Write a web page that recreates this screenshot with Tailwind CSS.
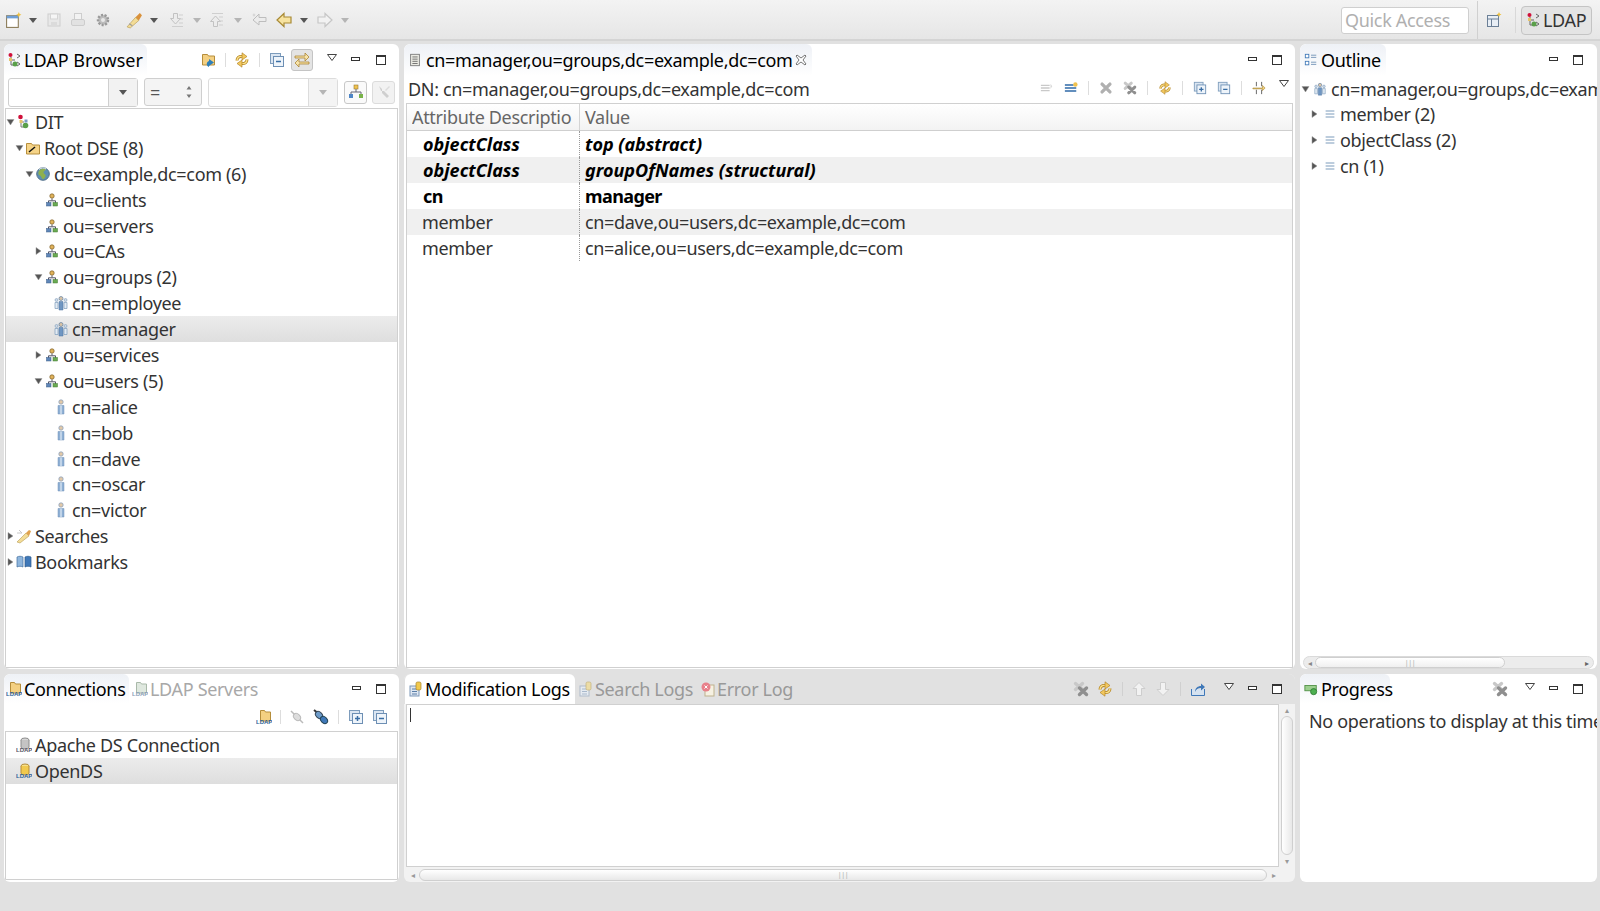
<!DOCTYPE html>
<html lang="en">
<head>
<meta charset="UTF-8">
<title>LDAP - Apache Directory Studio</title>
<script src="https://cdn.jsdelivr.net/npm/@tailwindcss/browser@4"></script>
</head>
<body class="w-[1600px] h-[911px] overflow-hidden whitespace-nowrap bg-[#e1e1e1] text-[18px] leading-[26px] tracking-[-0.33px] text-[#333] font-['Noto_Sans',sans-serif]">

<!-- shared icons -->
<svg class="hidden">
  <defs>
    <symbol id="tri" viewBox="0 0 10 10"><path d="M1 3h8L5 8z" fill="#555"/></symbol>
    <symbol id="tri-light" viewBox="0 0 10 10"><path d="M1 3h8L5 8z" fill="#b5b5b5"/></symbol>
    <symbol id="view-menu" viewBox="0 0 12 10"><path d="M1.5 1.5h9L6 7.500z" fill="#fff" stroke="#444"/></symbol>
    <symbol id="min" viewBox="0 0 12 12"><rect x="1.500" y="3.500" width="8" height="3" fill="#fff" stroke="#333"/></symbol>
    <symbol id="max" viewBox="0 0 12 12"><rect x="1.500" y="1.500" width="9" height="9" fill="#fff" stroke="#333"/><path d="M1.500 2.500h9" stroke="#333"/></symbol>
    <symbol id="open" viewBox="0 0 10 10"><path d="M1 2.500h7L4.500 8z" fill="#555" stroke="#999" stroke-width=".5"/></symbol>
    <symbol id="closed" viewBox="0 0 10 10"><path d="M2 1.500 7 5 2 8.500z" fill="#555" stroke="#999" stroke-width=".5"/></symbol>
    <symbol id="spin" viewBox="0 0 8 14"><path d="M4 1l2.500 3.500h-5zM4 13l2.500-3.500h-5z" fill="#777"/></symbol>
    <symbol id="dit" viewBox="0 0 16 16"><circle cx="4.500" cy="3" r="2.300" fill="#d0103a"/><path d="M5 6v7h3M5 8h3" stroke="#777" fill="none"/><rect x="3.500" y="6" width="3" height="3" fill="#e6c36a"/><circle cx="9.500" cy="11.500" r="2.800" fill="#5aa04a"/><rect x="8.500" y="5.500" width="3" height="3" fill="#7a9cc6"/></symbol>
    <symbol id="rootdse" viewBox="0 0 16 16"><path d="M1.500 3.500h5l1 1.500h7v9h-13z" fill="#f6d488" stroke="#b78f3c"/><path d="M4 12 10 7" stroke="#111" stroke-width="1.500"/></symbol>
    <symbol id="globe" viewBox="0 0 16 16"><circle cx="8" cy="8" r="6.300" fill="#5d8fb3" stroke="#56718a"/><path d="M3.500 6c1-3 5-4.500 7-3 1 1-2 2-2 3.500s3 2 2 4-2 3-3 2.500-1-3-2.500-3.500S3 8 3.500 6z" fill="#8fb04e"/><path d="M4 3.500c2-2 5-2 7-.5" stroke="#e6eef5" fill="none"/></symbol>
    <symbol id="ou" viewBox="0 0 16 16"><circle cx="8" cy="4" r="2.200" fill="#e0b25a" stroke="#7a5c22" stroke-width=".7"/><path d="M8 6.500v2M4.500 11V8.800h7V11" stroke="#556" fill="none"/><rect x="2.500" y="10.500" width="4.500" height="3.500" fill="#5f86b8" stroke="#3c5f8a" stroke-width=".5"/><rect x="9" y="10.500" width="4.500" height="3.500" fill="#6aaa52" stroke="#447a34" stroke-width=".5"/></symbol>
    <symbol id="group" viewBox="0 0 16 16"><circle cx="3.500" cy="5" r="1.500" fill="#cdd9e6" stroke="#7d9cbc" stroke-width=".6"/><path d="M2 7.500h3v6H2z" fill="#e3ebf3" stroke="#7d9cbc" stroke-width=".7"/><circle cx="12.500" cy="5" r="1.500" fill="#cdd9e6" stroke="#7d9cbc" stroke-width=".6"/><path d="M11 7.500h3v6h-3z" fill="#e3ebf3" stroke="#7d9cbc" stroke-width=".7"/><circle cx="8" cy="3.500" r="2" fill="#d9c3a5" stroke="#5f7fa3" stroke-width=".7"/><path d="M6 6.500h4V15H6z" fill="#6f96c2" stroke="#4f739c" stroke-width=".5"/></symbol>
    <symbol id="person" viewBox="0 0 16 16"><circle cx="8" cy="3" r="2.200" fill="#e2c9a8" stroke="#7f9abb" stroke-width=".7"/><path d="M5 6.500h6V15H5z" fill="#8fb0d4" stroke="#7092b8" stroke-width=".5"/><path d="M8 6.500V15" stroke="#e3edf6" stroke-width="1.200"/></symbol>
    <symbol id="search" viewBox="0 0 16 16"><path d="M1 14 10 5l3 3-9 7z" fill="#f3dc96" stroke="#b79a50" stroke-width=".6"/><path d="M10 5l3-3 2 1-2 5z" fill="#e1a24d"/><path d="M1 5h5M3 2l3 3" stroke="#c8c8c8"/></symbol>
    <symbol id="book" viewBox="0 0 16 16"><path d="M1 3c2-1 4-1 6 0v10c-2-1-4-1-6 0z" fill="#8fb6dd" stroke="#3f6d9e" stroke-width=".7"/><path d="M9 3c2-1 4-1 6 0v10c-2-1-4-1-6 0z" fill="#3f78b8" stroke="#2b5a8e" stroke-width=".7"/></symbol>
    <symbol id="attr" viewBox="0 0 16 16"><path d="M3 4.500h10M3 8h10M3 11.500h10" stroke="#7d9cbc" stroke-width="1.200"/></symbol>
    <symbol id="browser" viewBox="0 0 16 16"><circle cx="3.500" cy="3" r="2" fill="#d0103a"/><path d="M4 5v8h4M4 8h4M10 2l3 2-3 2M10 10l3 2-3 2" stroke="#666" fill="none"/><rect x="2" y="6" width="3" height="3" fill="#e6c36a"/><circle cx="8" cy="12" r="2.500" fill="#5aa04a"/></symbol>
    <symbol id="sync" viewBox="0 0 16 16"><path d="M3 8.500C3 5.500 5.500 4 8 4.500" stroke="#b5851f" stroke-width="3" fill="none"/><path d="M3 8.500C3 5.500 5.500 4 8 4.500" stroke="#fbe08a" stroke-width="1.400" fill="none"/><path d="M8 .8l5 3.700-5 3.500z" fill="#f3c85e" stroke="#a87a1e" stroke-width=".6"/><path d="M13 7.500c0 3-2.500 4.500-5 4" stroke="#b5851f" stroke-width="3" fill="none"/><path d="M13 7.500c0 3-2.500 4.500-5 4" stroke="#fbe08a" stroke-width="1.400" fill="none"/><path d="M8 15.200l-5-3.700 5-3.500z" fill="#f3c85e" stroke="#a87a1e" stroke-width=".6"/></symbol>
    <symbol id="collapse" viewBox="0 0 16 16"><rect x="1.500" y="1.500" width="10" height="10" fill="#dbe6f2" stroke="#7d9cbc"/><rect x="4.500" y="4.500" width="10" height="10" fill="#eef4fa" stroke="#6d8fb4"/><path d="M7 9.500h5" stroke="#3a6ea5" stroke-width="1.500"/></symbol>
    <symbol id="expand" viewBox="0 0 16 16"><rect x="1.500" y="1.500" width="10" height="10" fill="#dbe6f2" stroke="#7d9cbc"/><rect x="4.500" y="4.500" width="10" height="10" fill="#eef4fa" stroke="#6d8fb4"/><path d="M7 9.500h5M9.500 7v5" stroke="#3a6ea5" stroke-width="1.500"/></symbol>
    <symbol id="link" viewBox="0 0 16 16"><path d="M1 5h10V2l4 4-4 4V7H1z" fill="#f7e3a8" stroke="#a37a24" stroke-width=".7" transform="translate(0 -1)"/><path d="M15 11H5V8l-4 4 4 4v-3h10z" fill="#f7e3a8" stroke="#a37a24" stroke-width=".7" transform="translate(0 -1)"/></symbol>
    <symbol id="open-conn" viewBox="0 0 16 16"><path d="M1.500 2.500h5l1 1.500h6v9h-12z" fill="#f4d082" stroke="#b58d3b"/><path d="M8 15c-3-1-3-5 0-6V7l5 3.500L8 14z" fill="#2e7fb8"/></symbol>
    <symbol id="remove" viewBox="0 0 16 16"><path d="M3.500 3.500l9 9M12.500 3.500l-9 9" stroke="#b0b0b0" stroke-width="3.800" stroke-linecap="round"/></symbol>
    <symbol id="remove-all" viewBox="0 0 16 16"><path d="M2.500 2.500l7 6M9.500 2.500l-7 6" stroke="#c8c8c8" stroke-width="3.400" stroke-linecap="round"/><path d="M6.500 7l7 6.500M13.500 7l-7 6.500" stroke="#8f8f8f" stroke-width="3.400" stroke-linecap="round"/></symbol>
    <symbol id="new-attr-off" viewBox="0 0 16 16"><path d="M1 5h10M1 8h10M1 11h10" stroke="#c9c9c9" stroke-width="1.500"/><path d="M12 3l2 3-2 3z" fill="#d8d8d8"/></symbol>
    <symbol id="new-attr" viewBox="0 0 16 16"><path d="M1 4.500h10M1 8h13M1 11.500h13" stroke="#2f6aa8" stroke-width="1.800"/><circle cx="13" cy="4" r="2.500" fill="#f1c24e"/></symbol>
    <symbol id="filter" viewBox="0 0 16 16"><path d="M5 1v5M5 10v5M11 1v5M11 10v5" stroke="#555"/><path d="M1 8h11V5l3 3-3 3V9H1z" fill="#f3d17b" stroke="#9b7a2c" stroke-width=".6"/></symbol>
    <symbol id="new-win" viewBox="0 0 16 16"><rect x="1.500" y="3.500" width="11" height="11" fill="#fff" stroke="#8a7a55"/><rect x="1.500" y="3.500" width="11" height="2.500" fill="#6f9fd6"/><path d="M13 0l.8 1.800L15.500 2.500l-1.700.8L13 5l-.8-1.700-1.700-.8 1.700-.7z" fill="#efc23f"/></symbol>
    <symbol id="save" viewBox="0 0 16 16"><rect x="2" y="2" width="12" height="12" fill="#e8e8e8" stroke="#c8c8c8"/><rect x="4.500" y="2" width="7" height="5" fill="#f8f8f8" stroke="#cfcfcf"/><rect x="5" y="10" width="6" height="4" fill="#d8d8d8"/></symbol>
    <symbol id="print" viewBox="0 0 16 16"><rect x="4.500" y="1.500" width="7" height="6" fill="#f4f4f4" stroke="#c6c6c6"/><rect x="1.500" y="7.500" width="13" height="6" rx="1.500" fill="#e0e0e0" stroke="#c6c6c6"/></symbol>
    <symbol id="gear" viewBox="0 0 16 16"><circle cx="8" cy="8" r="5" fill="#bdbdbd" stroke="#999" stroke-width="2.500" stroke-dasharray="2 1.500"/><circle cx="8" cy="8" r="2" fill="#e8e8e8"/></symbol>
    <symbol id="wand" viewBox="0 0 16 16"><path d="M1 14 9 5l3 3-8 7z" fill="#f3dc96" stroke="#b79a50" stroke-width=".6"/><path d="M9 5l4-4 2 2-3 5z" fill="#d9913a"/><path d="M3 11l3 2" stroke="#9c9c9c"/></symbol>
    <symbol id="next-ann" viewBox="0 0 16 16"><path d="M5.500 1.500h4v5h3L7.500 12 2.500 6.500h3z" fill="#ececec" stroke="#c2c2c2"/><path d="M11 3h4M11 7h4M11 11h4M4 14.500h11" stroke="#cfcfcf"/></symbol>
    <symbol id="prev-ann" viewBox="0 0 16 16"><path d="M5.500 14.500h4v-5h3L7.500 4l-5 5.500h3z" fill="#ececec" stroke="#c2c2c2"/><path d="M11 5h4M11 9h4M11 13h4M4 1.500h11" stroke="#cfcfcf"/></symbol>
    <symbol id="last-edit" viewBox="0 0 16 16"><path d="M15 5.500H8V2L2 8l6 5V9.500h7z" fill="#ececec" stroke="#bdbdbd"/><path d="M3 1l.6 1.400L5 3l-1.400.6L3 5l-.6-1.400L1 3l1.400-.6z" fill="#cfcfcf"/></symbol>
    <symbol id="back" viewBox="0 0 16 16"><path d="M15 5H8V1.500L1 8l7 6.500V11h7z" fill="#f7e3a0" stroke="#a88a35" stroke-width="1.200"/></symbol>
    <symbol id="forward" viewBox="0 0 16 16"><path d="M1 5h7V1.500L15 8l-7 6.500V11H1z" fill="#f2f2f2" stroke="#c6c6c6" stroke-width="1.200"/></symbol>
    <symbol id="persp" viewBox="0 0 16 16"><rect x="1.500" y="3.500" width="11" height="11" fill="#e8eef5" stroke="#6b7f96"/><path d="M1.500 7h11M5.500 7v7.500" stroke="#6b7f96"/><path d="M13 0l.8 1.800L15.500 2.500l-1.700.8L13 5l-.8-1.700-1.700-.8 1.700-.7z" fill="#efc23f"/></symbol>
    <symbol id="outline" viewBox="0 0 16 16"><rect x="1.500" y="1.500" width="4" height="4" fill="#fff" stroke="#3f78b8"/><rect x="1.500" y="9.500" width="4" height="4" fill="#fff" stroke="#3f78b8"/><path d="M8 2.500h6M8 5h6M8 10.500h6M8 13h6" stroke="#6d8fb4"/></symbol>
    <symbol id="doc" viewBox="0 0 16 16"><rect x="3" y="1.500" width="10" height="13" fill="#ebebe4" stroke="#777"/><path d="M5 4.500h6M5 7h6M5 9.500h6M5 12h6" stroke="#666"/></symbol>
    <symbol id="close" viewBox="0 0 12 12"><path d="M2 1l4 3 4-3 1 1-3 4 3 4-1 1-4-3-4 3-1-1 3-4-3-4z" fill="#fff" stroke="#555" stroke-width=".8"/></symbol>
    <symbol id="conn" viewBox="0 0 16 16"><path d="M4.500 1.500h4l1 1.500h5v9h-10z" fill="#f4d082" stroke="#b58d3b"/><text x="0" y="14.500" font-size="6" font-weight="700" letter-spacing="0" fill="#2d5f96" font-family="Liberation Sans">LDAP</text></symbol>
    <symbol id="conn-grey" viewBox="0 0 16 16"><path d="M4.500 1.500h4l1 1.500h5v9h-10z" fill="#dfe8df" stroke="#a9b9a9"/><text x="0" y="14.500" font-size="6" font-weight="700" letter-spacing="0" fill="#8aa0b8" font-family="Liberation Sans">LDAP</text></symbol>
    <symbol id="db-grey" viewBox="0 0 16 16"><ellipse cx="9" cy="3" rx="4" ry="2" fill="#d6d6d6" stroke="#8c8c8c"/><path d="M5 3v7c0 2.500 8 2.500 8 0V3" fill="#c4c4c4" stroke="#8c8c8c"/><text x="0" y="15" font-size="6" font-weight="700" letter-spacing="0" fill="#556" font-family="Liberation Sans">LDAP</text></symbol>
    <symbol id="db-gold" viewBox="0 0 16 16"><ellipse cx="9" cy="3" rx="4" ry="2" fill="#f7e08a" stroke="#b58d3b"/><path d="M5 3v7c0 2.500 8 2.500 8 0V3" fill="#f1c94e" stroke="#b58d3b"/><text x="0" y="15" font-size="6" font-weight="700" letter-spacing="0" fill="#2d5f96" font-family="Liberation Sans">LDAP</text></symbol>
    <symbol id="plug-off" viewBox="0 0 16 16"><path d="M2 2l4 4M10 10l4 4" stroke="#bbb" stroke-width="1.500"/><ellipse cx="8" cy="8" rx="4" ry="3" transform="rotate(45 8 8)" fill="#ddd" stroke="#bbb"/></symbol>
    <symbol id="plug-on" viewBox="0 0 16 16"><path d="M1 1l5 4" stroke="#333" stroke-width="2"/><ellipse cx="6" cy="6" rx="4" ry="3" transform="rotate(45 6 6)" fill="#6d9bc9" stroke="#345"/><ellipse cx="11" cy="11" rx="4" ry="3" transform="rotate(45 11 11)" fill="#3f78b8" stroke="#245"/></symbol>
    <symbol id="log" viewBox="0 0 16 16"><rect x="2" y="5" width="9" height="10" fill="#dfe7f2" stroke="#7d97b8"/><path d="M4 8h5M4 10.500h5M4 13h5" stroke="#5a7ea8"/><rect x="8" y="1" width="5" height="8" rx="1.500" fill="#f1c94e" stroke="#a5812c" stroke-width=".7"/></symbol>
    <symbol id="log-grey" viewBox="0 0 16 16"><rect x="2" y="5" width="9" height="10" fill="#e6ebf1" stroke="#b0bccb"/><path d="M4 8h5M4 10.500h5M4 13h5" stroke="#a9b9cc"/><rect x="8" y="1" width="5" height="8" rx="1.500" fill="#ecdca6" stroke="#c3b27e" stroke-width=".7"/></symbol>
    <symbol id="err" viewBox="0 0 16 16"><rect x="5" y="4" width="9" height="11" fill="#f6f1e2" stroke="#bfb28e"/><circle cx="6" cy="6" r="4.500" fill="#e8808a"/><path d="M4.500 4.500l3 3M7.500 4.500l-3 3" stroke="#fff"/></symbol>
    <symbol id="progress" viewBox="0 0 16 16"><rect x="1" y="4" width="13" height="6" fill="#9bcf8e" stroke="#4e8f44"/><circle cx="11" cy="11" r="3.500" fill="#4caf50" stroke="#2f7d33"/></symbol>
    <symbol id="up" viewBox="0 0 16 16"><path d="M5.500 14.500v-7H2L8 1.500l6 6h-3.500v7z" fill="#f2f2f2" stroke="#cdcdcd"/></symbol>
    <symbol id="down" viewBox="0 0 16 16"><path d="M5.500 1.500v7H2l6 6 6-6h-3.500v-7z" fill="#f2f2f2" stroke="#cdcdcd"/></symbol>
    <symbol id="export" viewBox="0 0 16 16"><path d="M1.500 8v6.500h13V8" fill="#d5e2f0" stroke="#3f78b8"/><path d="M5 11c0-4 3-6 6-6V2.500L15 6l-4 3.500V7c-3 0-5 1.500-6 4z" fill="#3f78b8"/></symbol>
    <symbol id="tree-new" viewBox="0 0 16 16"><rect x="6" y="1" width="4" height="4" fill="#efc24f" stroke="#9b7a2c" stroke-width=".6"/><path d="M8 5v3M3 10V8h10v2" stroke="#667" fill="none"/><rect x="1" y="10" width="4" height="4" fill="#4f86c6"/><rect x="11" y="10" width="4" height="4" fill="#79b34a"/></symbol>
    <symbol id="tools-off" viewBox="0 0 16 16"><path d="M3 2l3 3v4l5 5 2-2-5-5H5z" fill="#cfcfcf"/><path d="M13 2l-4 4 1 1 4-4z" fill="#dcdcdc"/></symbol>
  </defs>
</svg>

<!-- main toolbar -->
<header class="h-[41px] flex items-center pt-[1px] bg-gradient-to-b from-[#f3f3f3] to-[#e6e6e6] border-b-2 border-[#d4d4d4]">
  <div class="flex items-center pl-[5px] h-full">
    <svg class="w-[17px] h-[17px]"><use href="#new-win"/></svg>
    <svg class="w-[10px] h-[10px] ml-[6px]"><use href="#tri"/></svg>
    <svg class="w-4 h-4 ml-[8px] opacity-80"><use href="#save"/></svg>
    <svg class="w-4 h-4 ml-2 opacity-80"><use href="#print"/></svg>
    <svg class="w-4 h-4 ml-[9px]"><use href="#gear"/></svg>
    <svg class="w-[17px] h-[17px] ml-[15px]"><use href="#wand"/></svg>
    <svg class="w-[10px] h-[10px] ml-[6px]"><use href="#tri"/></svg>
    <svg class="w-4 h-4 ml-[9px]"><use href="#next-ann"/></svg>
    <svg class="w-[10px] h-[10px] ml-[8px]"><use href="#tri-light"/></svg>
    <svg class="w-4 h-4 ml-[6px]"><use href="#prev-ann"/></svg>
    <svg class="w-[10px] h-[10px] ml-[9px]"><use href="#tri-light"/></svg>
    <svg class="w-4 h-4 ml-[8px]"><use href="#last-edit"/></svg>
    <svg class="w-4 h-4 ml-[9px]"><use href="#back"/></svg>
    <svg class="w-[10px] h-[10px] ml-[7px]"><use href="#tri"/></svg>
    <svg class="w-4 h-4 ml-[8px]"><use href="#forward"/></svg>
    <svg class="w-[10px] h-[10px] ml-[7px]"><use href="#tri-light"/></svg>
  </div>
  <div class="ml-auto flex items-center h-full">
    <div class="w-[128px] h-[27px] bg-white border border-[#cfcfcf] rounded-[3px] px-[3px] leading-[25px] text-[#b0b0b0]">Quick Access</div>
    <div class="w-px h-full bg-[#d0d0d0] ml-2"></div>
    <svg class="w-4 h-4 ml-[8px]"><use href="#persp"/></svg>
    <div class="w-px h-[26px] bg-[#d8d8d8] ml-[13px]"></div>
    <div class="flex items-center ml-[5px] mr-2 w-[71px] h-[29px] bg-[#e4e4e4] border border-[#c4c4c4] rounded-[4px] pl-[4px] gap-px text-[#333]">
      <svg class="w-4 h-4"><use href="#browser"/></svg>LDAP
    </div>
  </div>
</header>

<div class="grid grid-cols-[395px_891px_297px] grid-rows-[625px_208px] gap-[5px] pl-[4px] pt-[3px]">

  <!-- LDAP Browser -->
  <section class="bg-white rounded-md flex flex-col overflow-hidden">
    <div class="h-[32px] flex items-center">
      <div class="h-full flex items-center w-[143px] pl-[3px] gap-[1px] tracking-normal rounded-t-md bg-gradient-to-b from-[#eef1f6] to-white text-black">
        <svg class="w-4 h-4 shrink-0"><use href="#browser"/></svg>LDAP Browser
      </div>
      <div class="ml-auto flex items-center">
        <svg class="w-4 h-4"><use href="#open-conn"/></svg>
        <div class="w-px h-[14px] bg-[#ddd] mx-[8px]"></div>
        <svg class="w-4 h-4"><use href="#sync"/></svg>
        <div class="w-px h-[14px] bg-[#ddd] mx-[9px]"></div>
        <svg class="w-4 h-4"><use href="#collapse"/></svg>
        <div class="w-[22px] h-[22px] ml-[6px] bg-[#e4e4e4] border border-[#c4c4c4] rounded-[3px] flex items-center justify-center"><svg class="w-4 h-4"><use href="#link"/></svg></div>
        <svg class="w-3 h-[10px] ml-[13px] -mt-[5px]"><use href="#view-menu"/></svg>
        <svg class="w-3 h-3 ml-[12px]"><use href="#min"/></svg>
        <svg class="w-3 h-3 ml-[13px] mr-[12px]"><use href="#max"/></svg>
      </div>
    </div>
    <div class="h-[32px] flex items-center pl-[4px] text-[#555]">
      <div class="w-[130px] h-[29px] flex border border-[#cfcfcf] rounded-[3px]"><div class="flex-1"></div><div class="w-[29px] border-l border-[#cfcfcf] bg-[#f2f2f2] flex items-center justify-center"><svg class="w-[10px] h-[10px]"><use href="#tri"/></svg></div></div>
      <div class="w-[58px] h-[28px] ml-[6px] flex items-center justify-between border border-[#cfcfcf] rounded-[3px] bg-[#f4f4f4] pl-[5px] pr-[8px]">=<svg class="w-2 h-[14px]"><use href="#spin"/></svg></div>
      <div class="w-[130px] h-[29px] ml-[6px] flex border border-[#dcdcdc] rounded-[3px]"><div class="flex-1"></div><div class="w-[29px] border-l border-[#dcdcdc] bg-[#f4f4f4] flex items-center justify-center"><svg class="w-[10px] h-[10px]"><use href="#tri-light"/></svg></div></div>
      <div class="w-[23px] h-[23px] ml-[6px] border border-[#c8c8c8] rounded-[3px] flex items-center justify-center bg-[#fafafa]"><svg class="w-4 h-4"><use href="#tree-new"/></svg></div>
      <div class="w-[23px] h-[23px] ml-[5px] border border-[#dcdcdc] rounded-[3px] flex items-center justify-center bg-[#f2f2f2]"><svg class="w-4 h-4"><use href="#tools-off"/></svg></div>
    </div>
    <div class="flex-1 mx-px mb-px border border-[#d0d0d0] overflow-hidden">
      <div class="h-[25.9px] flex items-center"><svg class="w-[10px] h-[10px] shrink-0"><use href="#open"/></svg><svg class="w-4 h-4 shrink-0"><use href="#dit"/></svg><span class="ml-[3px]">DIT</span></div>
      <div class="h-[25.9px] flex items-center pl-[9px]"><svg class="w-[10px] h-[10px] shrink-0"><use href="#open"/></svg><svg class="w-4 h-4 shrink-0"><use href="#rootdse"/></svg><span class="ml-[3px]">Root DSE (8)</span></div>
      <div class="h-[25.9px] flex items-center pl-[19px]"><svg class="w-[10px] h-[10px] shrink-0"><use href="#open"/></svg><svg class="w-4 h-4 shrink-0"><use href="#globe"/></svg><span class="ml-[3px]">dc=example,dc=com (6)</span></div>
      <div class="h-[25.9px] flex items-center pl-[28px]"><span class="w-[10px]"></span><svg class="w-4 h-4 shrink-0"><use href="#ou"/></svg><span class="ml-[3px]">ou=clients</span></div>
      <div class="h-[25.9px] flex items-center pl-[28px]"><span class="w-[10px]"></span><svg class="w-4 h-4 shrink-0"><use href="#ou"/></svg><span class="ml-[3px]">ou=servers</span></div>
      <div class="h-[25.9px] flex items-center pl-[28px]"><svg class="w-[10px] h-[10px] shrink-0"><use href="#closed"/></svg><svg class="w-4 h-4 shrink-0"><use href="#ou"/></svg><span class="ml-[3px]">ou=CAs</span></div>
      <div class="h-[25.9px] flex items-center pl-[28px]"><svg class="w-[10px] h-[10px] shrink-0"><use href="#open"/></svg><svg class="w-4 h-4 shrink-0"><use href="#ou"/></svg><span class="ml-[3px]">ou=groups (2)</span></div>
      <div class="h-[25.9px] flex items-center pl-[37px]"><span class="w-[10px]"></span><svg class="w-4 h-4 shrink-0"><use href="#group"/></svg><span class="ml-[3px]">cn=employee</span></div>
      <div class="h-[25.9px] flex items-center pl-[37px] bg-gradient-to-b from-[#ececec] to-[#dedede]"><span class="w-[10px]"></span><svg class="w-4 h-4 shrink-0"><use href="#group"/></svg><span class="ml-[3px]">cn=manager</span></div>
      <div class="h-[25.9px] flex items-center pl-[28px]"><svg class="w-[10px] h-[10px] shrink-0"><use href="#closed"/></svg><svg class="w-4 h-4 shrink-0"><use href="#ou"/></svg><span class="ml-[3px]">ou=services</span></div>
      <div class="h-[25.9px] flex items-center pl-[28px]"><svg class="w-[10px] h-[10px] shrink-0"><use href="#open"/></svg><svg class="w-4 h-4 shrink-0"><use href="#ou"/></svg><span class="ml-[3px]">ou=users (5)</span></div>
      <div class="h-[25.9px] flex items-center pl-[37px]"><span class="w-[10px]"></span><svg class="w-4 h-4 shrink-0"><use href="#person"/></svg><span class="ml-[3px]">cn=alice</span></div>
      <div class="h-[25.9px] flex items-center pl-[37px]"><span class="w-[10px]"></span><svg class="w-4 h-4 shrink-0"><use href="#person"/></svg><span class="ml-[3px]">cn=bob</span></div>
      <div class="h-[25.9px] flex items-center pl-[37px]"><span class="w-[10px]"></span><svg class="w-4 h-4 shrink-0"><use href="#person"/></svg><span class="ml-[3px]">cn=dave</span></div>
      <div class="h-[25.9px] flex items-center pl-[37px]"><span class="w-[10px]"></span><svg class="w-4 h-4 shrink-0"><use href="#person"/></svg><span class="ml-[3px]">cn=oscar</span></div>
      <div class="h-[25.9px] flex items-center pl-[37px]"><span class="w-[10px]"></span><svg class="w-4 h-4 shrink-0"><use href="#person"/></svg><span class="ml-[3px]">cn=victor</span></div>
      <div class="h-[25.9px] flex items-center"><svg class="w-[10px] h-[10px] shrink-0"><use href="#closed"/></svg><svg class="w-4 h-4 shrink-0"><use href="#search"/></svg><span class="ml-[3px]">Searches</span></div>
      <div class="h-[25.9px] flex items-center"><svg class="w-[10px] h-[10px] shrink-0"><use href="#closed"/></svg><svg class="w-4 h-4 shrink-0"><use href="#book"/></svg><span class="ml-[3px]">Bookmarks</span></div>
    </div>
  </section>

  <!-- entry editor -->
  <section class="bg-white rounded-md flex flex-col overflow-hidden">
    <div class="h-[32px] flex items-center">
      <div class="h-full flex items-center w-[408px] pl-[4px] rounded-t-md bg-gradient-to-b from-[#eef1f6] to-white text-black">
        <svg class="w-[14px] h-[14px] shrink-0 mr-[4px]"><use href="#doc"/></svg>cn=manager,ou=groups,dc=example,dc=com
        <svg class="w-3 h-3 ml-[2px] shrink-0"><use href="#close"/></svg>
      </div>
      <div class="ml-auto flex items-center">
        <svg class="w-3 h-3"><use href="#min"/></svg>
        <svg class="w-3 h-3 ml-[12px] mr-[12px]"><use href="#max"/></svg>
      </div>
    </div>
    <div class="h-[27px] flex items-center pl-[4px] pb-[2px]">
      DN: cn=manager,ou=groups,dc=example,dc=com
      <div class="ml-auto flex items-center pr-[5px] -mt-px">
        <svg class="w-[14px] h-[14px]"><use href="#new-attr-off"/></svg>
        <svg class="w-[14px] h-[14px] ml-[10px]"><use href="#new-attr"/></svg>
        <div class="w-px h-[14px] bg-[#ddd] mx-[10px]"></div>
        <svg class="w-[14px] h-[14px]"><use href="#remove"/></svg>
        <svg class="w-[14px] h-[14px] ml-[10px]"><use href="#remove-all"/></svg>
        <div class="w-px h-[14px] bg-[#ddd] mx-[10px]"></div>
        <svg class="w-[14px] h-[14px]"><use href="#sync"/></svg>
        <div class="w-px h-[14px] bg-[#ddd] mx-[10px]"></div>
        <svg class="w-[14px] h-[14px]"><use href="#expand"/></svg>
        <svg class="w-[14px] h-[14px] ml-[10px]"><use href="#collapse"/></svg>
        <div class="w-px h-[14px] bg-[#ddd] mx-[10px]"></div>
        <svg class="w-[14px] h-[14px]"><use href="#filter"/></svg>
        <svg class="w-3 h-[10px] ml-[12px] -mt-2"><use href="#view-menu"/></svg>
      </div>
    </div>
    <div class="flex-1 mx-[2px] mb-px border border-[#d0d0d0]">
      <div class="h-[27px] flex items-center bg-gradient-to-b from-white to-[#f3f3f3] border-b border-[#cfcfcf] text-[#666]">
        <div class="w-[173px] pl-[5px] overflow-hidden border-r border-[#d4d4d4] h-full leading-[27px] pr-[7px]"><div class="overflow-hidden">Attribute Description</div></div>
        <div class="pl-[5px]">Value</div>
      </div>
      <div class="h-[26px] flex items-center font-bold italic tracking-normal text-black bg-white"><div class="w-[173px] pl-4 h-full leading-[26px] border-r border-dotted border-[#999]">objectClass</div><div class="pl-[5px]">top (abstract)</div></div>
      <div class="h-[26px] flex items-center font-bold italic tracking-normal text-black bg-[#f0f0f0]"><div class="w-[173px] pl-4 h-full leading-[26px] border-r border-dotted border-[#999]">objectClass</div><div class="pl-[5px]">groupOfNames (structural)</div></div>
      <div class="h-[26px] flex items-center font-bold tracking-[-0.6px] text-black bg-white"><div class="w-[173px] pl-4 h-full leading-[26px] border-r border-dotted border-[#999]">cn</div><div class="pl-[5px]">manager</div></div>
      <div class="h-[26px] flex items-center bg-[#f0f0f0]"><div class="w-[173px] pl-[15px] h-full leading-[26px] border-r border-dotted border-[#999]">member</div><div class="pl-[5px]">cn=dave,ou=users,dc=example,dc=com</div></div>
      <div class="h-[26px] flex items-center bg-white"><div class="w-[173px] pl-[15px] h-full leading-[26px] border-r border-dotted border-[#999]">member</div><div class="pl-[5px]">cn=alice,ou=users,dc=example,dc=com</div></div>
    </div>
  </section>

  <!-- outline -->
  <section class="bg-white rounded-md flex flex-col overflow-hidden">
    <div class="h-[32px] flex items-center">
      <div class="h-full flex items-center w-[86px] pl-[4px] gap-[3px] rounded-t-md bg-gradient-to-b from-[#eef1f6] to-white text-black">
        <svg class="w-[14px] h-[14px] shrink-0"><use href="#outline"/></svg>Outline
      </div>
      <div class="ml-auto flex items-center">
        <svg class="w-3 h-3"><use href="#min"/></svg>
        <svg class="w-3 h-3 ml-[12px] mr-[13px]"><use href="#max"/></svg>
      </div>
    </div>
    <div class="flex-1 pl-[1px] overflow-hidden">
      <div class="h-[25px] flex items-center"><svg class="w-[10px] h-[10px] shrink-0"><use href="#open"/></svg><svg class="w-[14px] h-[14px] shrink-0 ml-[2px]"><use href="#group"/></svg><span class="ml-[4px]">cn=manager,ou=groups,dc=example,dc=com</span></div>
      <div class="h-[25.9px] flex items-center pl-[9px]"><svg class="w-[10px] h-[10px] shrink-0"><use href="#closed"/></svg><svg class="w-[14px] h-[14px] shrink-0 ml-[3px]"><use href="#attr"/></svg><span class="ml-[3px]">member (2)</span></div>
      <div class="h-[25.9px] flex items-center pl-[9px]"><svg class="w-[10px] h-[10px] shrink-0"><use href="#closed"/></svg><svg class="w-[14px] h-[14px] shrink-0 ml-[3px]"><use href="#attr"/></svg><span class="ml-[3px]">objectClass (2)</span></div>
      <div class="h-[25.9px] flex items-center pl-[9px]"><svg class="w-[10px] h-[10px] shrink-0"><use href="#closed"/></svg><svg class="w-[14px] h-[14px] shrink-0 ml-[3px]"><use href="#attr"/></svg><span class="ml-[3px]">cn (1)</span></div>
    </div>
    <div class="h-[13px] mx-[3px] flex items-center rounded-full bg-[#ececec] border border-[#dadada]">
      <div class="w-[11px] text-center text-[8px] leading-[11px] text-[#888]">◂</div>
      <div class="w-[190px] h-full rounded-full bg-gradient-to-b from-white to-[#f0f0f0] border border-[#cfcfcf] flex items-center justify-center text-[7px] leading-[7px] text-[#aaa]">|||</div>
      <div class="ml-auto w-[13px] text-center text-[8px] leading-[11px] text-[#666]">▸</div>
    </div>
  </section>

  <!-- connections -->
  <section class="bg-white rounded-md flex flex-col overflow-hidden">
    <div class="h-[29px] flex items-center">
      <div class="h-full flex items-center w-[125px] pl-[2px] gap-[2px] rounded-t-md bg-gradient-to-b from-[#eef1f6] to-white text-black">
        <svg class="w-4 h-4 shrink-0"><use href="#conn"/></svg>Connections
      </div>
      <div class="flex items-center pl-[3px] gap-[2px] text-[#a8a8a8]"><svg class="w-4 h-4 shrink-0"><use href="#conn-grey"/></svg>LDAP Servers</div>
      <div class="ml-auto flex items-center">
        <svg class="w-3 h-3"><use href="#min"/></svg>
        <svg class="w-3 h-3 ml-[12px] mr-[12px]"><use href="#max"/></svg>
      </div>
    </div>
    <div class="h-[28px] flex items-center justify-end pr-[11px]">
      <svg class="w-4 h-4"><use href="#conn"/></svg>
      <div class="w-px h-[14px] bg-[#ddd] mx-[8px]"></div>
      <svg class="w-4 h-4"><use href="#plug-off"/></svg>
      <svg class="w-4 h-4 ml-[8px]"><use href="#plug-on"/></svg>
      <div class="w-px h-[14px] bg-[#ddd] mx-[9px]"></div>
      <svg class="w-4 h-4"><use href="#expand"/></svg>
      <svg class="w-4 h-4 ml-2"><use href="#collapse"/></svg>
    </div>
    <div class="flex-1 mx-px mb-[2px] border border-[#d0d0d0]">
      <div class="h-[25.9px] flex items-center pl-[10px]"><svg class="w-4 h-4 shrink-0 mr-[3px]"><use href="#db-grey"/></svg>Apache DS Connection</div>
      <div class="h-[25.9px] flex items-center pl-[10px] bg-gradient-to-b from-[#ececec] to-[#dedede]"><svg class="w-4 h-4 shrink-0 mr-[3px]"><use href="#db-gold"/></svg>OpenDS</div>
    </div>
  </section>

  <!-- logs -->
  <section class="bg-[#f2f2f2] rounded-md flex flex-col overflow-hidden">
    <div class="h-[30px] flex items-center bg-[#e1e1e1]">
      <div class="h-full flex items-center w-[170px] pl-[3px] gap-[1px] rounded-t-md bg-white text-black ml-px">
        <svg class="w-4 h-4 shrink-0"><use href="#log"/></svg>Modification Logs
      </div>
      <div class="flex items-center pl-[3px] gap-[1px] text-[#999]"><svg class="w-4 h-4 shrink-0"><use href="#log-grey"/></svg>Search Logs</div>
      <div class="flex items-center pl-[7px] gap-px text-[#999]"><svg class="w-4 h-4 shrink-0"><use href="#err"/></svg>Error Log</div>
      <div class="ml-auto flex items-center">
        <svg class="w-4 h-4"><use href="#remove-all"/></svg>
        <svg class="w-4 h-4 ml-[8px]"><use href="#sync"/></svg>
        <div class="w-px h-[14px] bg-[#d0d0d0] mx-[8.500px]"></div>
        <svg class="w-4 h-4"><use href="#up"/></svg>
        <svg class="w-4 h-4 ml-2"><use href="#down"/></svg>
        <div class="w-px h-[14px] bg-[#d0d0d0] mx-[9px]"></div>
        <svg class="w-4 h-4"><use href="#export"/></svg>
        <svg class="w-3 h-[10px] ml-[17px] -mt-[4px]"><use href="#view-menu"/></svg>
        <svg class="w-3 h-3 ml-[12px]"><use href="#min"/></svg>
        <svg class="w-3 h-3 ml-[12px] mr-[12px]"><use href="#max"/></svg>
      </div>
    </div>
    <div class="flex-1 flex pl-[2px] min-h-0">
      <div class="flex-1 bg-white border border-[#d0d0d0] pl-[3px] pt-[3px]"><div class="w-px h-[14px] bg-[#333]"></div></div>
      <div class="w-[14px] mx-[1px] flex flex-col items-center">
        <div class="h-[12px] w-[12px] text-center text-[8px] leading-[12px] text-[#999]">▴</div>
        <div class="flex-1 w-[12px] rounded-full bg-gradient-to-r from-white to-[#e8e8e8] border border-[#cfcfcf]"></div>
        <div class="h-[12px] w-[12px] text-center text-[8px] leading-[12px] text-[#999]">▾</div>
      </div>
    </div>
    <div class="h-[15px] flex items-center pl-[2px] pr-[15px]">
      <div class="w-[13px] text-center text-[8px] leading-[13px] text-[#999]">◂</div>
      <div class="flex-1 h-[12px] rounded-full bg-gradient-to-b from-white to-[#e8e8e8] border border-[#cfcfcf] flex items-center justify-center text-[7px] leading-[7px] text-[#aaa]">|||</div>
      <div class="w-[13px] text-center text-[8px] leading-[13px] text-[#999]">▸</div>
    </div>
  </section>

  <!-- progress -->
  <section class="bg-white rounded-md flex flex-col overflow-hidden">
    <div class="h-[30px] flex items-center">
      <div class="h-full flex items-center w-[90px] pl-[4px] gap-[3px] rounded-t-md bg-gradient-to-b from-[#eef1f6] to-white text-black">
        <svg class="w-[14px] h-[14px] shrink-0"><use href="#progress"/></svg>Progress
      </div>
      <div class="ml-auto flex items-center">
        <svg class="w-4 h-4"><use href="#remove-all"/></svg>
        <svg class="w-3 h-[10px] ml-[16px] -mt-[4px]"><use href="#view-menu"/></svg>
        <svg class="w-3 h-3 ml-[12px]"><use href="#min"/></svg>
        <svg class="w-3 h-3 ml-[12px] mr-[13px]"><use href="#max"/></svg>
      </div>
    </div>
    <div class="pl-[9px] pt-[4px] overflow-hidden">No operations to display at this time.</div>
  </section>
</div>
</body>
</html>
